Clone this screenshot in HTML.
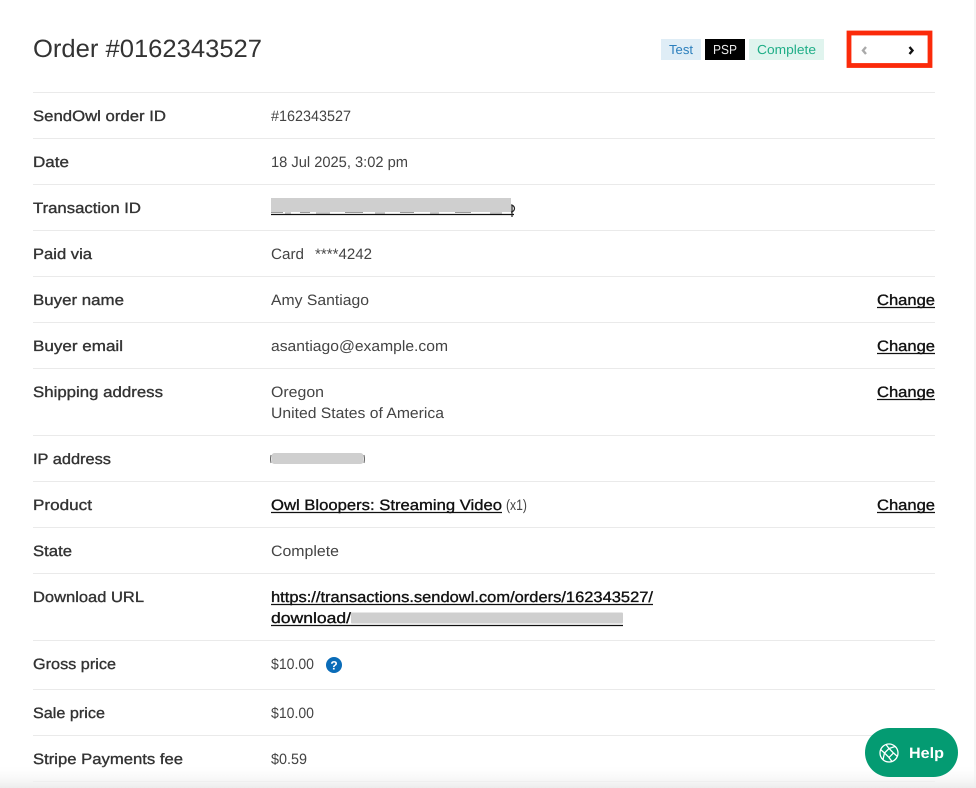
<!DOCTYPE html>
<html>
<head>
<meta charset="utf-8">
<style>
html,body{margin:0;padding:0;background:#fff;width:976px;height:788px;overflow:hidden}
svg{display:block;position:absolute;left:0;top:0}
text{font-family:"Liberation Sans","DejaVu Sans",sans-serif;fill:#3a3a3a;font-size:15px;text-rendering:geometricPrecision}
.l{fill:#333;stroke:#333;stroke-width:.35px;font-size:15px}
.v{fill:#444}
.a{fill:#111;stroke:#111;stroke-width:.35px;font-size:15px}
.u{stroke:#111;stroke-width:1.2}
.r{stroke:#eaeaea;stroke-width:1}
.b{fill:#cfcfcf}
</style>
</head>
<body>
<svg width="976" height="788" viewBox="0 0 976 788" xmlns="http://www.w3.org/2000/svg">
<defs>
<linearGradient id="g" x1="0" y1="0" x2="0" y2="1">
<stop offset="0" stop-color="#fff" stop-opacity="0"/>
<stop offset="1" stop-color="#ececec"/>
</linearGradient>
</defs>
<rect width="976" height="788" fill="#fff"/>
<rect x="974" y="0" width="2" height="788" fill="#f5f5f5"/>

<text x="33" y="57" style="font-size:25px;fill:#333" textLength="229" lengthAdjust="spacingAndGlyphs">Order #0162343527</text>

<rect x="661" y="39" width="40" height="21" fill="#dfedf6"/>
<text x="669" y="54" style="font-size:13px;fill:#2b7fbd" textLength="24" lengthAdjust="spacingAndGlyphs">Test</text>
<rect x="705" y="39" width="40" height="21" fill="#000"/>
<text x="713" y="54" style="font-size:13px;fill:#e8e8e8" textLength="24" lengthAdjust="spacingAndGlyphs">PSP</text>
<rect x="749" y="39" width="75" height="21" fill="#e0f4ee"/>
<text x="757" y="54" style="font-size:13px;fill:#1fae87" textLength="59" lengthAdjust="spacingAndGlyphs">Complete</text>

<rect x="849" y="33" width="81" height="32.500" fill="#fff" stroke="#fb2a0a" stroke-width="4.800"/>
<path d="M866 47L863 50.500L866 54" fill="none" stroke="#aaa" stroke-width="2.400"/>
<path d="M909.500 47L912.500 50.500L909.500 54" fill="none" stroke="#111" stroke-width="2.400"/>

<g>
<line class="r" x1="33" x2="935" y1="92.500" y2="92.500"/>
<line class="r" x1="33" x2="935" y1="138.500" y2="138.500"/>
<line class="r" x1="33" x2="935" y1="184.500" y2="184.500"/>
<line class="r" x1="33" x2="935" y1="230.500" y2="230.500"/>
<line class="r" x1="33" x2="935" y1="276.500" y2="276.500"/>
<line class="r" x1="33" x2="935" y1="322.500" y2="322.500"/>
<line class="r" x1="33" x2="935" y1="368.500" y2="368.500"/>
<line class="r" x1="33" x2="935" y1="435.500" y2="435.500"/>
<line class="r" x1="33" x2="935" y1="481.500" y2="481.500"/>
<line class="r" x1="33" x2="935" y1="527.500" y2="527.500"/>
<line class="r" x1="33" x2="935" y1="573.500" y2="573.500"/>
<line class="r" x1="33" x2="935" y1="640.500" y2="640.500"/>
<line class="r" x1="33" x2="935" y1="689.500" y2="689.500"/>
<line class="r" x1="33" x2="935" y1="735.500" y2="735.500"/>
<line class="r" x1="33" x2="935" y1="781.500" y2="781.500"/>
</g>

<text class="l" x="33" y="121" textLength="133" lengthAdjust="spacingAndGlyphs">SendOwl order ID</text>
<text class="v" x="271" y="121" textLength="80" lengthAdjust="spacingAndGlyphs">#162343527</text>

<text class="l" x="33" y="167" textLength="36" lengthAdjust="spacingAndGlyphs">Date</text>
<text class="v" x="271" y="167" textLength="137" lengthAdjust="spacingAndGlyphs">18 Jul 2025, 3:02 pm</text>

<text class="l" x="33" y="213" textLength="108" lengthAdjust="spacingAndGlyphs">Transaction ID</text>
<line class="u" x1="271" x2="514" y1="214.500" y2="214.500"/>
<path d="M271 212.500h12M285 213h6M300 212.500h10M316 213h14M345 212.500h18M375 213h10M400 212.500h14M430 213h9M455 212.500h16M490 213h12" stroke="#999" stroke-width="1" fill="none"/>
<path d="M511 205a3.500 3.500 0 0 1 0 7M512 206v11" stroke="#222" stroke-width="1.200" fill="none"/>
<rect class="b" x="271" y="198" width="240" height="14"/>

<text class="l" x="33" y="259" textLength="59" lengthAdjust="spacingAndGlyphs">Paid via</text>
<text class="v" x="271" y="259" textLength="33" lengthAdjust="spacingAndGlyphs">Card</text>
<text class="v" x="315" y="259" textLength="57" lengthAdjust="spacingAndGlyphs">****4242</text>

<text class="l" x="33" y="305" textLength="91" lengthAdjust="spacingAndGlyphs">Buyer name</text>
<text class="v" x="271" y="305" textLength="98" lengthAdjust="spacingAndGlyphs">Amy Santiago</text>
<text class="a" x="877" y="305" textLength="58" lengthAdjust="spacingAndGlyphs">Change</text>
<line class="u" x1="877" x2="935" y1="307.500" y2="307.500"/>

<text class="l" x="33" y="351" textLength="90" lengthAdjust="spacingAndGlyphs">Buyer email</text>
<text class="v" x="271" y="351" textLength="177" lengthAdjust="spacingAndGlyphs">asantiago@example.com</text>
<text class="a" x="877" y="351" textLength="58" lengthAdjust="spacingAndGlyphs">Change</text>
<line class="u" x1="877" x2="935" y1="353.500" y2="353.500"/>

<text class="l" x="33" y="397" textLength="130" lengthAdjust="spacingAndGlyphs">Shipping address</text>
<text class="v" x="271" y="397" textLength="53" lengthAdjust="spacingAndGlyphs">Oregon</text>
<text class="v" x="271" y="418" textLength="173" lengthAdjust="spacingAndGlyphs">United States of America</text>
<text class="a" x="877" y="397" textLength="58" lengthAdjust="spacingAndGlyphs">Change</text>
<line class="u" x1="877" x2="935" y1="399.500" y2="399.500"/>

<text class="l" x="33" y="464" textLength="78" lengthAdjust="spacingAndGlyphs">IP address</text>
<path d="M271 455q-1 4 0 8M364 455q1 4 0 8" stroke="#666" stroke-width="1" fill="none"/>
<rect class="b" x="271.500" y="453" width="92" height="11" rx="3"/>

<text class="l" x="33" y="510" textLength="59" lengthAdjust="spacingAndGlyphs">Product</text>
<text class="a" x="271" y="510" textLength="231" lengthAdjust="spacingAndGlyphs">Owl Bloopers: Streaming Video</text>
<line class="u" x1="271" x2="502" y1="512.500" y2="512.500"/>
<text class="v" x="506" y="510" textLength="21" lengthAdjust="spacingAndGlyphs">(x1)</text>
<text class="a" x="877" y="510" textLength="58" lengthAdjust="spacingAndGlyphs">Change</text>
<line class="u" x1="877" x2="935" y1="512.500" y2="512.500"/>

<text class="l" x="33" y="556" textLength="39" lengthAdjust="spacingAndGlyphs">State</text>
<text class="v" x="271" y="556" textLength="68" lengthAdjust="spacingAndGlyphs">Complete</text>

<text class="l" x="33" y="602" textLength="111" lengthAdjust="spacingAndGlyphs">Download URL</text>
<text class="a" x="271" y="602" textLength="382" lengthAdjust="spacingAndGlyphs">https://transactions.sendowl.com/orders/162343527/</text>
<line class="u" x1="271" x2="653" y1="604.500" y2="604.500"/>
<text class="a" x="271" y="623" textLength="80" lengthAdjust="spacingAndGlyphs">download/</text>
<line class="u" x1="271" x2="623" y1="625.500" y2="625.500"/>
<rect class="b" x="351" y="612.500" width="272" height="11" rx="1"/>

<text class="l" x="33" y="669" textLength="83" lengthAdjust="spacingAndGlyphs">Gross price</text>
<text class="v" x="271" y="669" textLength="43" lengthAdjust="spacingAndGlyphs">$10.00</text>
<circle cx="334" cy="665" r="8" fill="#0a6cb8"/>
<text x="334" y="669.500" text-anchor="middle" style="font-size:12px;font-weight:bold;fill:#fff">?</text>

<text class="l" x="33" y="718" textLength="72" lengthAdjust="spacingAndGlyphs">Sale price</text>
<text class="v" x="271" y="718" textLength="43" lengthAdjust="spacingAndGlyphs">$10.00</text>

<text class="l" x="33" y="764" textLength="150" lengthAdjust="spacingAndGlyphs">Stripe Payments fee</text>
<text class="v" x="271" y="764" textLength="36" lengthAdjust="spacingAndGlyphs">$0.59</text>

<rect x="0" y="764" width="976" height="24" fill="url(#g)"/>

<rect x="865" y="728" width="93" height="49" rx="24.500" fill="#049b72"/>
<g fill="none" stroke="#fff" stroke-width="1.300">
<circle cx="889" cy="753" r="9"/>
<path d="M889 748.500L893.500 753L889 757.500L884.500 753Z"/>
<path d="M884.500 753L880.500 749.500M889 748.500L886 744.500M893.500 753L897.500 756.500M889 757.500L892 761.500M889 748.500L895 746.500M884.500 753L883 759.500"/>
</g>
<text x="909" y="758" style="font-size:15px;font-weight:bold;fill:#fff" textLength="35" lengthAdjust="spacingAndGlyphs">Help</text>
</svg>
</body>
</html>
